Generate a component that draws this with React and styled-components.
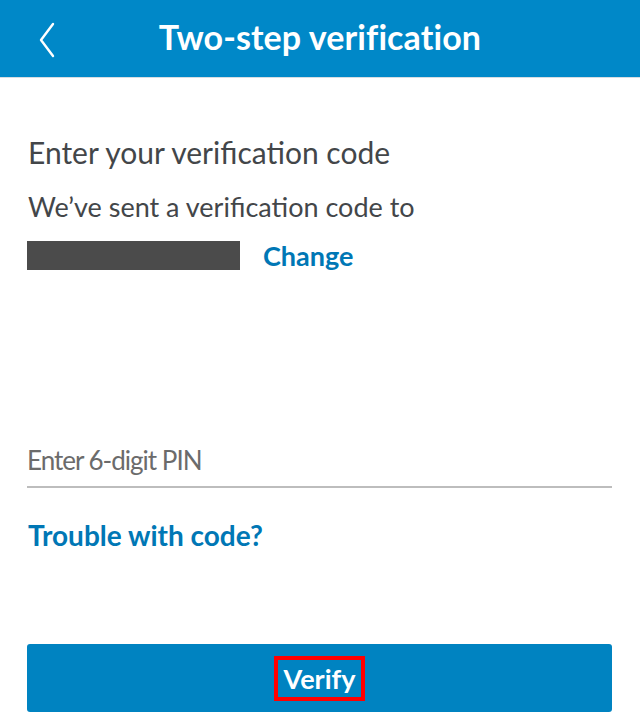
import styled, { createGlobalStyle } from "styled-components";

const GlobalStyle = createGlobalStyle`
  html, body {
    margin: 0;
    padding: 0;
    background: #fff;
  }
  body {
    font-family: Lato, "Noto Sans", sans-serif;
  }
`;

function App() {
  return (
    <Page>
      <GlobalStyle />
      <Header>
        <BackButton aria-label="Back">
          <svg width="20" height="36" viewBox="0 0 20 36">
            <path
              d="M15 2 L3 18 L15 34"
              fill="none"
              stroke="#fff"
              strokeWidth="2.4"
              strokeLinecap="round"
              strokeLinejoin="round"
            />
          </svg>
        </BackButton>
        <Title>Two-step verification</Title>
      </Header>
      <Body>
        <Heading>Enter your verification code</Heading>
        <Text>We’ve sent a verification code to</Text>
        <SentRow>
          <Redacted />
          <Link>Change</Link>
        </SentRow>
        <PinInput placeholder="Enter 6-digit PIN" />
        <Trouble>Trouble with code?</Trouble>
        <VerifyButton>
          <Marked>Verify</Marked>
        </VerifyButton>
      </Body>
    </Page>
  );
}

export default App;

const Page = styled.div`
  width: 640px;
  height: 728px;
  background: #fff;
  display: flex;
  flex-direction: column;
`;

const Header = styled.div`
  height: 77px;
  background-color: #0088c8;
  border-bottom: 1px solid #d6dde2;
  display: flex;
  align-items: center;
  justify-content: center;
  position: relative;
`;

const BackButton = styled.div`
  position: absolute;
  left: 38px;
  top: 22px;
  display: flex;
`;

const Title = styled.div`
  color: #fff;
  font-size: 34px;
  font-weight: 700;
  letter-spacing: 0.1px;
  margin-top: -4px;
`;

const Body = styled.div`
  flex: 1;
  padding: 0 28px 16px 28px;
  display: flex;
  flex-direction: column;
`;

const Heading = styled.div`
  margin-top: 56px;
  font-size: 30px;
  color: #434649;
  line-height: 36px;
`;

const Text = styled.div`
  margin-top: 21px;
  font-size: 27px;
  color: #434649;
  line-height: 32px;
`;

const SentRow = styled.div`
  margin-top: 16px;
  display: flex;
  align-items: center;
  gap: 23px;
`;

const Redacted = styled.div`
  width: 213px;
  height: 29px;
  background: #4b4b4b;
  margin-left: -1px;
`;

const Link = styled.span`
  font-size: 27px;
  font-weight: 700;
  color: #0077b5;
`;

const PinInput = styled.input`
  margin-top: 172px;
  margin-left: -1px;
  width: 585px;
  border: none;
  border-bottom: 2px solid #bdbdbd;
  padding: 0 0 10px 0;
  font-family: Lato, "Noto Sans", sans-serif;
  font-size: 26px;
  letter-spacing: -1px;
  color: #434649;
  outline: none;
  background: transparent;
  &::placeholder {
    color: #6b6b6b;
  }
`;

const Trouble = styled.div`
  margin-top: 30px;
  font-size: 28px;
  font-weight: 700;
  color: #0077b5;
`;

const VerifyButton = styled.div`
  margin-top: auto;
  margin-left: -1px;
  width: 585px;
  height: 68px;
  background: #0083c1;
  border-radius: 3px;
  display: flex;
  align-items: center;
  justify-content: center;
`;

const Marked = styled.span`
  color: #fff;
  font-size: 27px;
  font-weight: 700;
  border: 4px solid #ff0000;
  padding: 2px 6px;
`;
